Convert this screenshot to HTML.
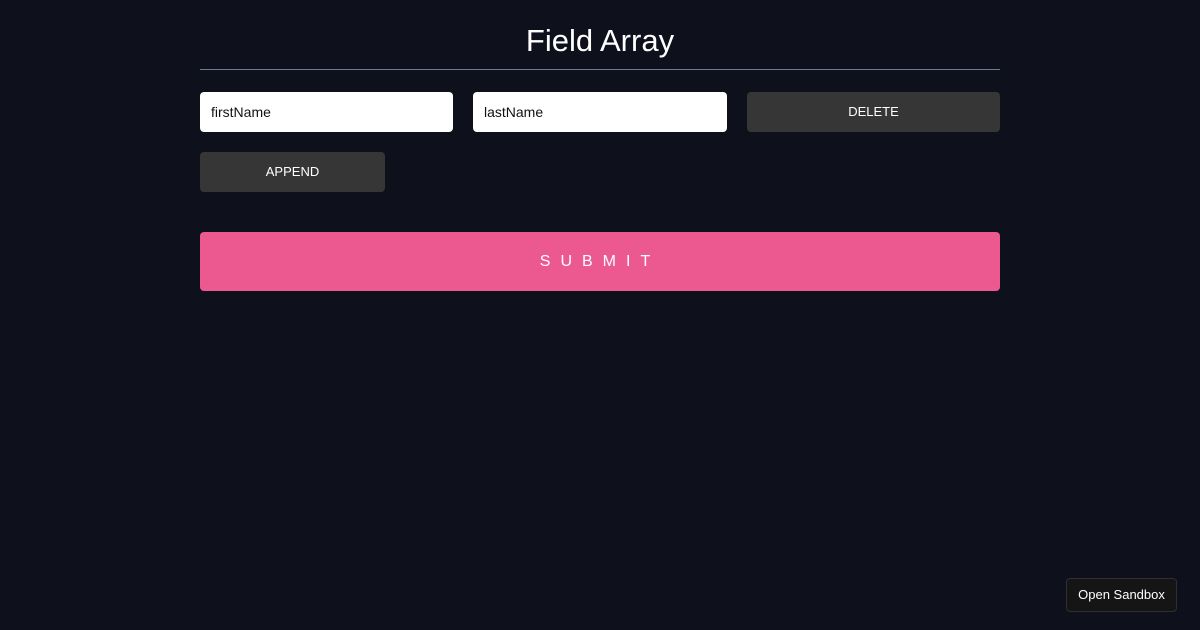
<!DOCTYPE html>
<html><head><style>
body{margin:0;width:1200px;height:630px;background:#0e101c;font-family:"Liberation Sans",sans-serif;position:relative;overflow:hidden}
.a{position:absolute;box-sizing:border-box}
h1{position:absolute;left:0;width:1200px;top:21px;margin:0;text-align:center;font-weight:normal;font-size:31px;color:#fff;line-height:40px}
.hr{left:200px;top:69px;width:800px;height:1px;background:#6f7a94}
.in{background:#fff;border-radius:4px;height:40px;top:92px;font-size:14px;color:#111;line-height:40px;padding-left:11px}
.btn{background:#363636;border-radius:4px;color:#fff;font-size:13px;text-align:center;height:40px;line-height:40px}
</style></head><body>
<h1>Field Array</h1>
<div class="a hr"></div>
<div class="a in" style="left:200px;width:253px">firstName</div>
<div class="a in" style="left:473px;width:254px">lastName</div>
<div class="a btn" style="left:747px;top:92px;width:253px">DELETE</div>
<div class="a btn" style="left:200px;top:152px;width:185px">APPEND</div>
<div class="a" style="left:200px;top:232px;width:800px;height:59px;background:#ec5990;border-radius:4px;color:#fff;text-align:center;line-height:59px;font-size:16px;letter-spacing:10px;padding-left:0">SUBMIT</div>
<div class="a" style="left:1066px;top:578px;width:111px;height:34px;background:#151515;border:1px solid #2e2e33;border-radius:4px;color:#fff;font-size:13px;text-align:center;line-height:32px">Open Sandbox</div>
</body></html>
